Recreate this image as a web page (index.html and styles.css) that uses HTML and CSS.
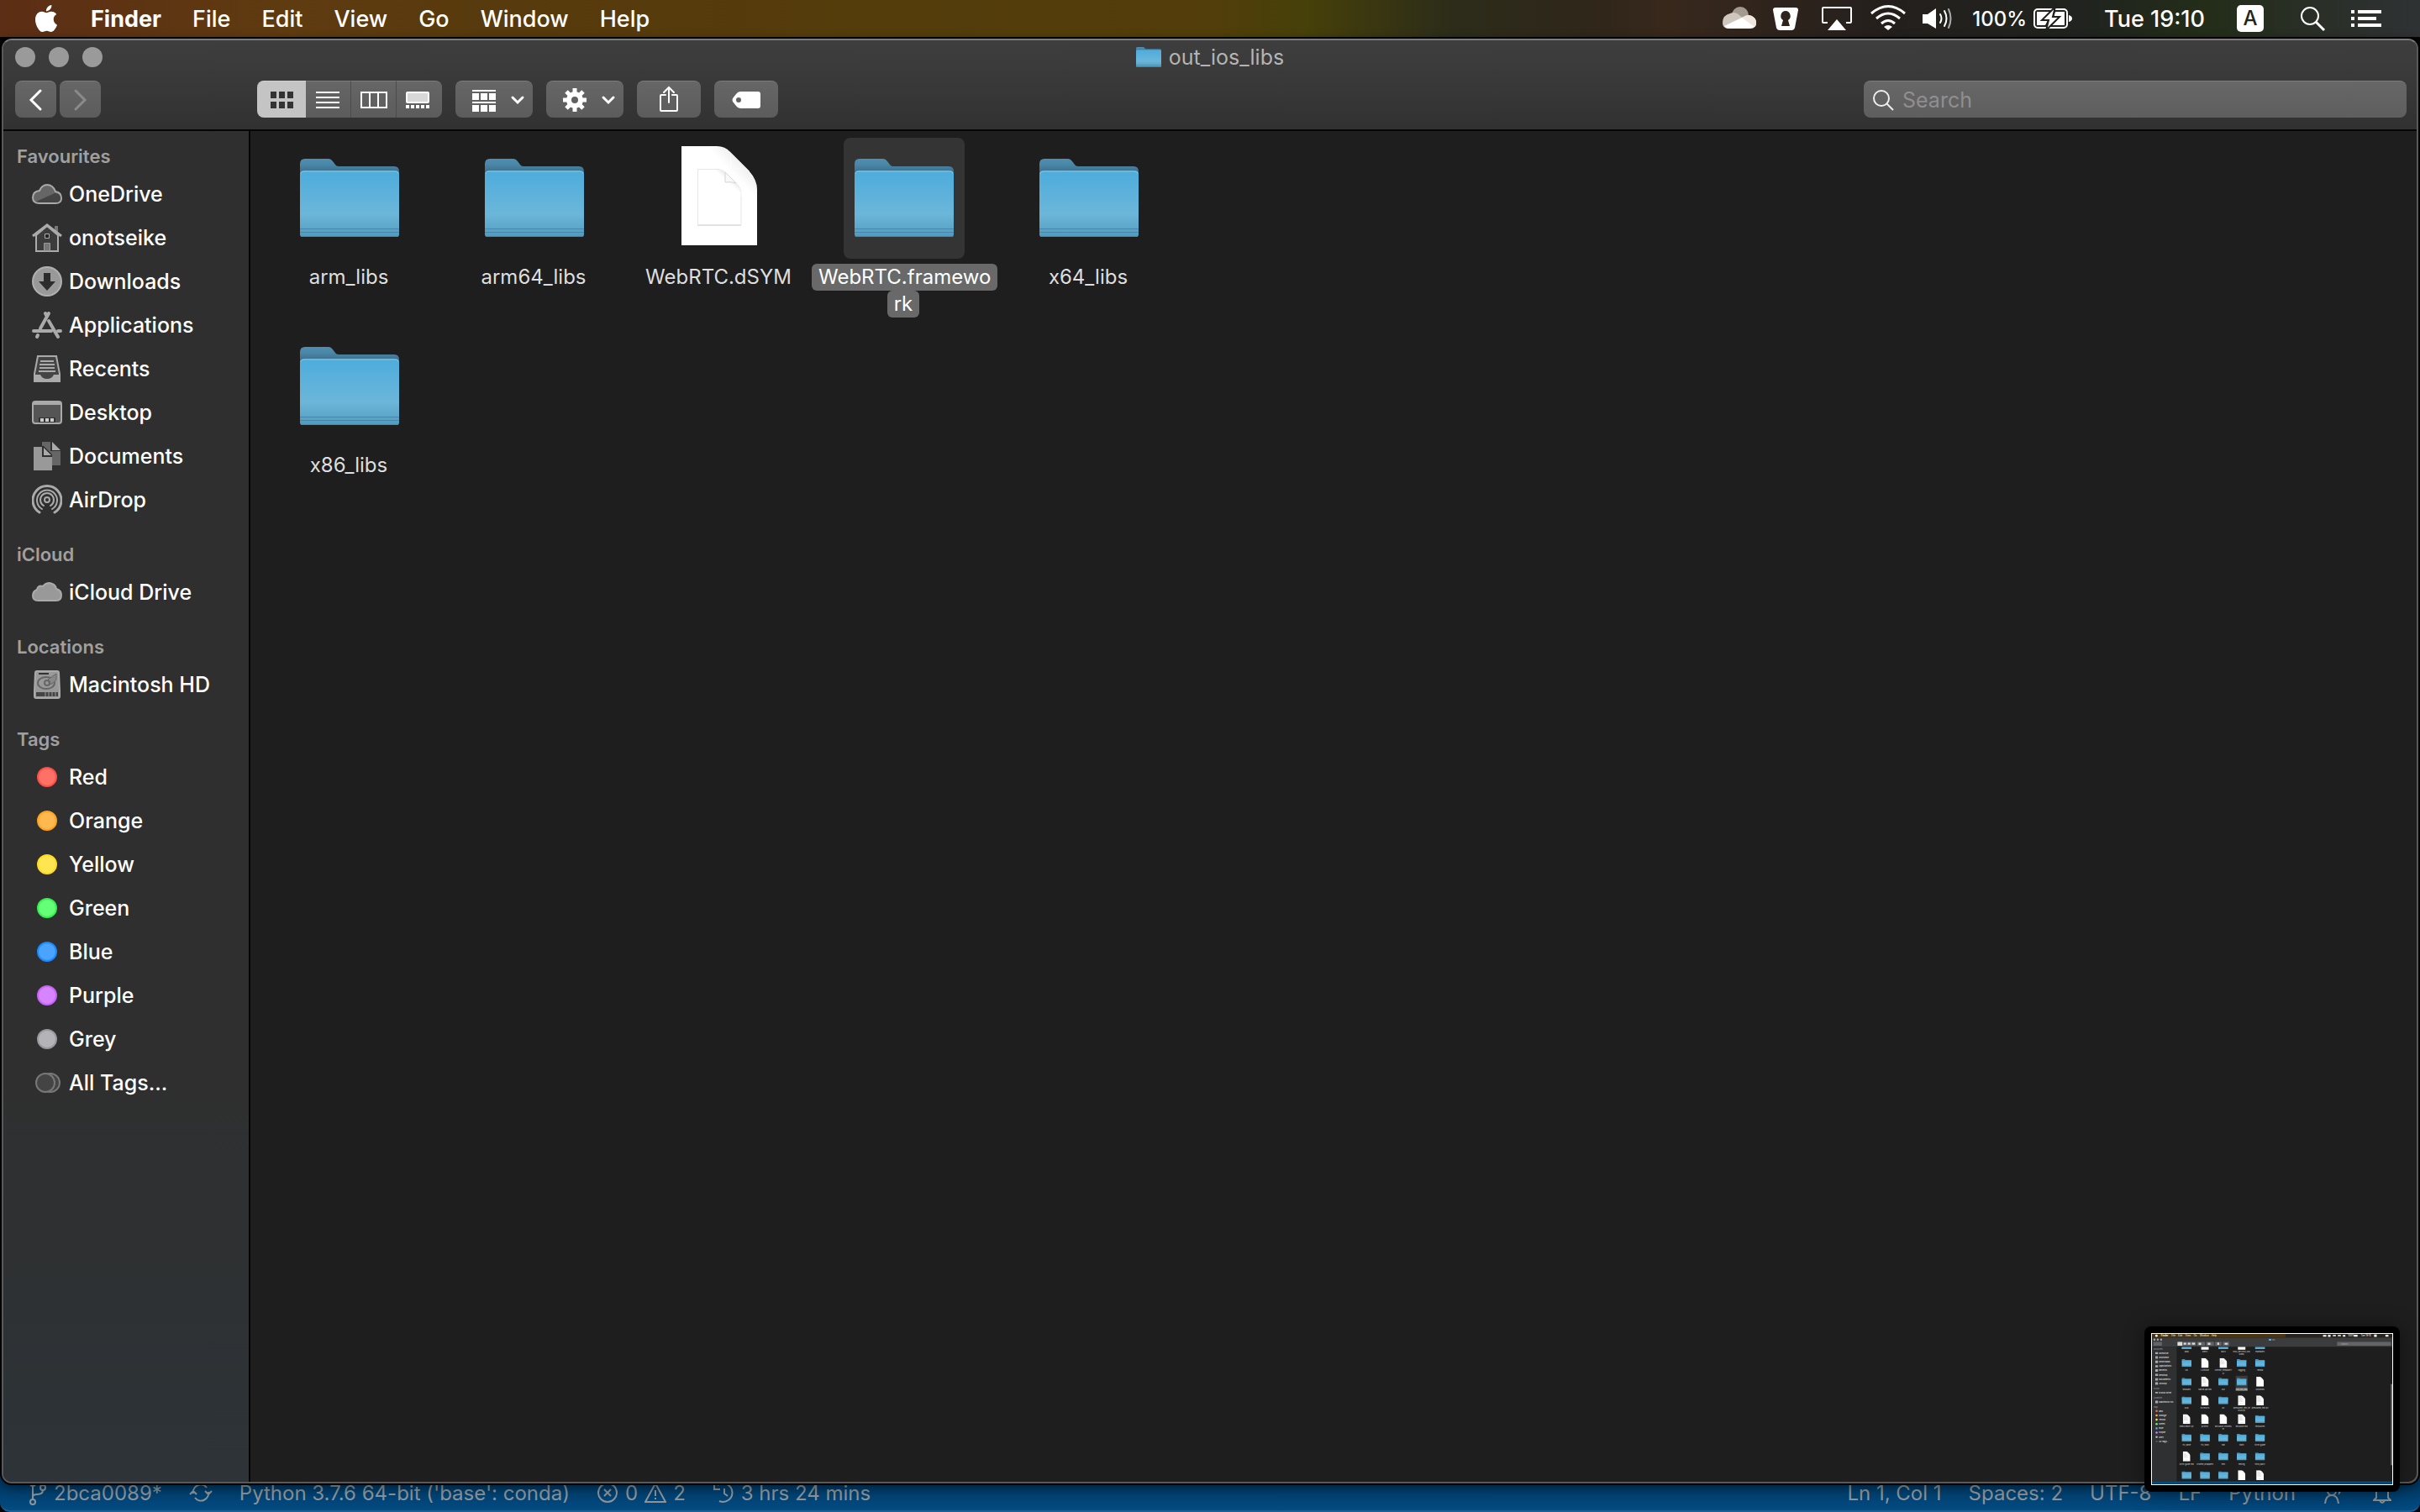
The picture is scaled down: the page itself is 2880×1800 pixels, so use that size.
FILE: index.html
```html
<!DOCTYPE html>
<html lang="en">
<head>
    <meta charset="UTF-8">
    <meta name="viewport" content="width=device-width, initial-scale=1.0">
    <title>out_ios_libs</title>
    <link rel="stylesheet" href="styles.css">
</head>
<body>

    <!-- shared shapes -->
    <svg class="defs" width="0" height="0" aria-hidden="true">
        <defs>
            <linearGradient id="front" x1="0" y1="0" x2="0" y2="1">
                <stop offset="0" stop-color="#4dacdc"/>
                <stop offset="0.65" stop-color="#6bb6d9"/>
                <stop offset="0.85" stop-color="#5ea8cb"/>
                <stop offset="1" stop-color="#4f9abf"/>
            </linearGradient>
            <linearGradient id="back" x1="0" y1="0" x2="0" y2="1">
                <stop offset="0" stop-color="#4f8fb3"/>
                <stop offset="0.18" stop-color="#4a86a8"/>
                <stop offset="0.36" stop-color="#3f738f"/>
            </linearGradient>
            <linearGradient id="fold" x1="0" y1="1" x2="1" y2="0">
                <stop offset="0" stop-color="#ffffff"/>
                <stop offset="1" stop-color="#e4e4e4"/>
            </linearGradient>
            <linearGradient id="shade" x1="0" y1="1" x2="1" y2="0">
                <stop offset="0.55" stop-color="#ffffff"/>
                <stop offset="0.8" stop-color="#d8d8d8"/>
            </linearGradient>
            <symbol id="folder" viewBox="0 0 118 94">
                <path fill="url(#back)" d="M0 6Q0 0 6 0H34Q37 0 39 3L42 7Q43 9 46 9H112Q118 9 118 15V40H0Z"/>
                <path fill="url(#front)" d="M0 19Q0 14 5 14H113Q118 14 118 19V90Q118 93 115 93H3Q0 93 0 90Z"/>
                <path fill="none" stroke="#7cc6e8" d="M1 18Q1 15 5 15H113Q117 15 117 18"/>
                <path stroke="#4588ab" d="M0 83.500H118M0 87.500H118M1 92.500H117"/>
            </symbol>
            <symbol id="doc" viewBox="0 0 90 118">
                <path fill="#fff" d="M0 0H42Q52 0 58 7L80 29Q90 40 90 52V118H0Z"/>
                <path fill="url(#shade)" opacity="0.6" d="M24 1H42Q52 0 58 8V27Q72 26 80 30Q90 40 90 52V70L58 50Z"/>
                <path fill="url(#fold)" d="M57 6L81 30Q72 25 58 27Q60 14 57 6Z"/>
                <path fill="#fff" stroke="#e6e6e6" d="M19.500 27.500H44Q50 28 54 33L66 45Q71 50 71 58V93.500H19.500Z"/>
                <path fill="url(#shade)" d="M35 28H44Q50 28 54 33L66 45Q71 50 71 60L52 48Z"/>
                <path fill="#fafafa" stroke="#d4d4d4" d="M52 31L65 44Q60 42 52 43Z"/>
                <path stroke="#dedede" d="M19 94.500H71"/>
            </symbol>
            <symbol id="page" viewBox="0 0 90 118">
                <path fill="#fff" d="M0 0H42Q52 0 58 7L80 29Q90 40 90 52V118H0Z"/>
                <path fill="#ddd" d="M57 6L81 30Q72 25 58 27Z"/>
            </symbol>
            <symbol id="textpage" viewBox="0 0 90 118">
                <use href="#page"/>
                <path stroke="#bbb" stroke-width="4" d="M12 22H42M12 34H48M12 46H60M12 58H54M12 70H64M30 100H62"/>
            </symbol>
        </defs>
    </svg>

    <header class="menubar">
        <nav class="menus">
            <svg class="apple" viewBox="0 0 24 24" width="32" height="32"><path fill="#fff" d="M12.152 6.896c-.948 0-2.415-1.078-3.960-1.040-2.040.027-3.910 1.183-4.961 3.014-2.117 3.675-.546 9.103 1.519 12.090 1.013 1.454 2.208 3.090 3.792 3.039 1.520-.065 2.090-.987 3.935-.987 1.831 0 2.350.987 3.960.948 1.637-.026 2.676-1.480 3.676-2.948 1.156-1.688 1.636-3.325 1.662-3.415-.039-.013-3.182-1.221-3.220-4.857-.026-3.040 2.480-4.494 2.597-4.559-1.429-2.090-3.623-2.324-4.390-2.376-2-.156-3.675 1.090-4.610 1.090zM15.530 3.830c.843-1.012 1.400-2.427 1.245-3.830-1.207.052-2.662.805-3.532 1.818-.780.896-1.454 2.338-1.273 3.714 1.338.104 2.715-.688 3.559-1.701"/></svg>
            <a href="#" class="app">Finder</a>
            <a href="#">File</a>
            <a href="#">Edit</a>
            <a href="#">View</a>
            <a href="#">Go</a>
            <a href="#">Window</a>
            <a href="#">Help</a>
        </nav>
        <div class="extras">
            <svg width="48" height="44" viewBox="0 0 48 44">
                <circle cx="25" cy="18" r="10" fill="#a49a90"/>
                <path fill="#cfc7be" d="M4 27Q4 18 13 16Q19 13 25 19L31 24L10 34Q4 33 4 27Z"/>
                <path fill="#fff" d="M6 31L29 20Q34 17 38 19Q44 21 44 27Q44 34 37 34H12Q8 34 6 31Z"/>
                <path fill="#efe7de" d="M27 21Q34 16 39 19Q44 22 44 27Q44 31 42 32Z"/>
            </svg>
            <svg width="46" height="44" viewBox="0 0 46 44">
                <path fill="#fff" fill-rule="evenodd" d="M11 9H35Q38 9 38 12L34 33Q33 36 30 36H16Q13 36 12 33L8 12Q8 9 11 9ZM23 13a6 6 0 0 0-3 11l-2 7h10l-2-7a6 6 0 0 0-3-11Z"/>
            </svg>
            <svg width="60" height="44" viewBox="0 0 60 44">
                <path fill="none" stroke="#fff" stroke-width="2" d="M19 27H14Q13 27 13 26V10Q13 9 14 9H46Q47 9 47 10V26Q47 27 46 27H41"/>
                <path fill="#fff" d="M30 23L41 36H19Z"/>
            </svg>
            <svg width="46" height="44" viewBox="0 0 46 44">
                <g fill="none" stroke="#fff" stroke-width="3"><path d="M3 16Q23 -1 43 16M9 22Q23 10 37 22M15 28Q23 21 31 28"/></g>
                <path fill="#fff" d="M23 36L18 32Q23 28 28 32Z"/>
            </svg>
            <svg width="54" height="44" viewBox="0 0 54 44">
                <path fill="#fff" d="M10 17H16L26 10V34L16 28H10Z"/>
                <path fill="none" stroke="#fff" stroke-width="2" stroke-linecap="round" d="M31 17Q34 22 31 27M36 13Q41 22 36 31"/>
                <path fill="none" stroke="#aaa" stroke-width="2" stroke-linecap="round" d="M41 11Q46 22 41 33"/>
            </svg>
            <span class="charge">100%</span>
            <svg width="46" height="44" viewBox="0 0 46 44">
                <rect x="1" y="11" width="39" height="22" rx="4" fill="none" stroke="#fff" stroke-width="2"/>
                <path fill="#fff" d="M4 14H20L10 24H17L14 30H4ZM26 14H37V30H22L31 21H24ZM42 18Q46 19 46 22T42 26Z"/>
                <path fill="#fff" stroke="#20221f" stroke-width="2" d="M26 8L10 24H18L15 36L31 20H23Z"/>
            </svg>
            <span class="clock">Tue 19:10</span>
            <span class="input-source">A</span>
            <svg width="88" height="44" viewBox="0 0 88 44">
                <circle cx="47" cy="19" r="10" fill="none" stroke="#fff" stroke-width="2"/>
                <path stroke="#fff" stroke-width="3" d="M54 26L64 36"/>
            </svg>
            <svg width="36" height="44" viewBox="0 0 36 44">
                <path fill="#fff" d="M0 12h4v4h-4zM0 20h4v4h-4zM0 28h4v4h-4zM8 12h28v4h-28zM8 20h22v4h-22zM8 28h28v4h-28z"/>
            </svg>
        </div>
    </header>

    <main class="window">
        <div class="titlebar">
            <div class="lights"><i></i><i></i><i></i></div>
            <div class="title"><svg width="30" height="24"><use href="#folder"/></svg>out_ios_libs</div>
        </div>

        <div class="toolbar">
            <div class="nav-buttons">
                <button aria-label="Back"><svg width="49" height="44" viewBox="0 0 49 44"><path fill="none" stroke="#fff" stroke-width="3" stroke-linecap="round" d="M30 11L19 22L30 33"/></svg></button>
                <button aria-label="Forward"><svg width="49" height="44" viewBox="0 0 49 44"><path fill="none" stroke="#8a8a8a" stroke-width="3" stroke-linecap="round" d="M19 11L30 22L19 33"/></svg></button>
            </div>

            <div class="views">
                <button class="active" aria-label="Icons"><svg width="54" height="44" viewBox="0 0 54 44"><path fill="#333" d="M14 12h7v8h-7zM24 12h7v8h-7zM34 12h7v8h-7zM14 24h7v8h-7zM24 24h7v8h-7zM34 24h7v8h-7z"/></svg></button>
                <button aria-label="List"><svg width="53" height="44" viewBox="0 0 53 44"><path stroke="#fff" stroke-width="2" d="M12 13H40M12 19H40M12 25H40M12 31H40"/></svg></button>
                <button aria-label="Columns"><svg width="53" height="44" viewBox="0 0 53 44"><path fill="none" stroke="#fff" stroke-width="2" d="M12 13H42V31H12ZM22 13V31M32 13V31"/></svg></button>
                <button aria-label="Gallery"><svg width="54" height="44" viewBox="0 0 54 44"><rect x="12" y="13" width="26" height="12" rx="1" fill="#d8d8d8" stroke="#fff" stroke-width="2"/><path fill="#fff" d="M11 28h4v4h-4zM17 28h4v4h-4zM23 28h4v4h-4zM29 28h4v4h-4zM35 28h4v4h-4z"/></svg></button>
            </div>

            <button aria-label="Group by"><svg width="92" height="44" viewBox="0 0 92 44"><path fill="#fff" d="M20 10h28v2h-28zM20 24h28v2h-28zM20 14h8v8h-8zM30 14h8v8h-8zM40 14h8v8h-8zM20 28h8v8h-8zM30 28h8v8h-8zM40 28h8v8h-8z"/><path fill="none" stroke="#fff" stroke-width="3" stroke-linecap="round" d="M68 19L74 25L80 19"/></svg></button>
            <button aria-label="Actions"><svg width="92" height="44" viewBox="0 0 92 44"><circle cx="34" cy="22" r="7" fill="none" stroke="#fff" stroke-width="6"/><path stroke="#fff" stroke-width="5" d="M34 8V14M34 30V36M20 22H26M42 22H48M24 12L28 16M40 28L44 32M44 12L40 16M28 28L24 32"/><path fill="none" stroke="#fff" stroke-width="3" stroke-linecap="round" d="M68 19L74 25L80 19"/></svg></button>
            <button aria-label="Share"><svg width="76" height="44" viewBox="0 0 76 44"><path fill="none" stroke="#fff" stroke-width="2" stroke-linecap="round" d="M34 16H29Q28 16 28 17V34Q28 35 29 35H47Q48 35 48 34V17Q48 16 47 16H42M38 25V7M32 13L38 7L44 13"/></svg></button>
            <button aria-label="Tags"><svg width="76" height="44" viewBox="0 0 76 44"><path fill="#fff" fill-rule="evenodd" d="M31 12H52Q55 12 55 15V29Q55 32 52 32H31Q28 32 26 29L22 24Q21 22 22 20L26 15Q28 12 31 12ZM29 19a3 3 0 1 0 0 6a3 3 0 0 0 0-6Z"/></svg></button>

            <label class="search">
                <svg width="26" height="26" viewBox="0 0 26 26"><circle cx="11" cy="11" r="9" fill="none" stroke="#eee" stroke-width="2"/><path stroke="#eee" stroke-width="2" d="M17 17L25 25"/></svg>
                <input type="text" placeholder="Search" aria-label="Search">
            </label>
        </div>

        <div class="content">
            <aside class="sidebar">
                <h2>Favourites</h2>
                <a href="#"><svg viewBox="0 0 36 36"><path fill="#666" stroke="#aaa" stroke-width="2" d="M9 29Q1 29 1 22Q1 15 9 14Q12 7 18 7Q25 7 28 15Q35 16 35 23Q35 29 28 29Z"/><path fill="#444" d="M5 27L27 17Q34 17 34 23Q34 28 28 28H9Z"/></svg>OneDrive</a>
                <a href="#"><svg viewBox="0 0 36 36"><path fill="#777" d="M27 4h4v9l-4-4z"/><path fill="#3c3c3c" stroke="#aaa" stroke-width="2" d="M5 15V34H31V15L18 4Z"/><path fill="none" stroke="#aaa" stroke-width="3" d="M1 16L18 3L35 16"/><path fill="#222" stroke="#aaa" d="M15.500 13.500h5v5h-5z"/><path fill="#777" stroke="#999" d="M14.500 24.500h7v9h-7z"/></svg>onotseike</a>
                <a href="#"><svg viewBox="0 0 36 36"><circle cx="18" cy="18" r="17" fill="#999" stroke="#b0b0b0" stroke-width="2"/><path fill="#2c2c2c" d="M14 8H22V18H28L18 29L8 18H14Z"/></svg>Downloads</a>
                <a href="#"><svg viewBox="0 0 36 36"><g fill="none" stroke="#aaa" stroke-width="4" stroke-linecap="round"><path d="M2 25H23M31 25H34M20 4L10 22M16 4L18 8M20 13L31 32M7 30L6 32"/></g></svg>Applications</a>
                <a href="#"><svg viewBox="0 0 36 36"><path fill="#444" stroke="#aaa" stroke-width="2" d="M7 3H29L33 24V33H3V24Z"/><path fill="#aaa" d="M3 25H10Q12 30 18 30T26 25H33V34H3Z"/><path stroke="#aaa" stroke-width="2" d="M10 9H26M9 13H27M9 17H27M8 21H28"/></svg>Recents</a>
                <a href="#"><svg viewBox="0 0 36 36"><rect x="1" y="5" width="34" height="26" rx="3" fill="#555" stroke="#aaa" stroke-width="2"/><path fill="#aaa" d="M2 5H34V9H2Z"/><path fill="#333" d="M8 24h20v6h-20z"/><path fill="#ccc" d="M10 25h4v4h-4zM16 25h4v4h-4zM22 25h4v4h-4z"/></svg>Desktop</a>
                <a href="#"><svg viewBox="0 0 36 36"><path fill="#666" d="M12 1H22V12H34V29H24V16L14 6H12Z"/><path fill="#aaa" d="M24 1L34 11H24Z"/><path fill="#999" d="M2 7H12V19H24V35H2Z"/><path fill="#aaa" d="M14 8L23 17H14Z"/></svg>Documents</a>
                <a href="#"><svg viewBox="0 0 36 36"><g fill="none" stroke="#aaa" stroke-width="2" stroke-linecap="round"><path stroke-width="3" d="M9 33A17 17 0 1 1 27 33"/><path d="M12 29A12 12 0 1 1 24 29M14 25A8 8 0 1 1 22 25"/></g><circle cx="18" cy="18" r="3" fill="none" stroke="#aaa" stroke-width="2"/></svg>AirDrop</a>

                <h2>iCloud</h2>
                <a href="#"><svg viewBox="0 0 36 36"><path fill="#999" stroke="#aaa" stroke-width="2" d="M7 28Q1 28 1 22Q1 17 6 15Q7 9 13 11Q16 7 21 7Q28 8 29 14Q35 16 35 21Q35 28 29 28Z"/></svg>iCloud Drive</a>

                <h2>Locations</h2>
                <a href="#"><svg viewBox="0 0 36 36"><path fill="#999" stroke="#aaa" stroke-width="2" d="M6 2H30Q32 2 32 4L33 26V32Q33 34 31 34H5Q3 34 3 32V26L4 4Q4 2 6 2Z"/><path stroke="#333" stroke-width="2" d="M8 5H20"/><ellipse cx="17" cy="16" rx="10" ry="7" fill="none" stroke="#666" stroke-width="2"/><path fill="#888" stroke="#666" d="M19 12L29 5V12Q26 17 21 18Z"/><circle cx="18" cy="16" r="3" fill="none" stroke="#666" stroke-width="2"/><path fill="#444" d="M5 27h26v5h-26z"/><path stroke="#999" d="M16 27v5M20 27v5M24 27v5M28 27v5"/></svg>Macintosh HD</a>

                <h2>Tags</h2>
                <a href="#"><i class="dot red"></i>Red</a>
                <a href="#"><i class="dot orange"></i>Orange</a>
                <a href="#"><i class="dot yellow"></i>Yellow</a>
                <a href="#"><i class="dot green"></i>Green</a>
                <a href="#"><i class="dot blue"></i>Blue</a>
                <a href="#"><i class="dot purple"></i>Purple</a>
                <a href="#"><i class="dot grey"></i>Grey</a>
                <a href="#"><svg viewBox="0 0 36 36"><g fill="#444" stroke="#777" stroke-width="2"><circle cx="22" cy="18" r="11"/><circle cx="16" cy="18" r="11"/></g></svg>All Tags...</a>
            </aside>

            <section class="files">
                <figure><div class="thumb"><svg width="118" height="94"><use href="#folder"/></svg></div><figcaption><span>arm_libs</span></figcaption></figure>
                <figure><div class="thumb"><svg width="118" height="94"><use href="#folder"/></svg></div><figcaption><span>arm64_libs</span></figcaption></figure>
                <figure><div class="thumb file"><svg width="90" height="118"><use href="#doc"/></svg></div><figcaption><span>WebRTC.dSYM</span></figcaption></figure>
                <figure class="selected"><div class="thumb"><svg width="118" height="94"><use href="#folder"/></svg></div><figcaption><span>WebRTC.framewo<wbr>rk</span></figcaption></figure>
                <figure><div class="thumb"><svg width="118" height="94"><use href="#folder"/></svg></div><figcaption><span>x64_libs</span></figcaption></figure>
                <figure><div class="thumb"><svg width="118" height="94"><use href="#folder"/></svg></div><figcaption><span>x86_libs</span></figcaption></figure>
            </section>
        </div>
    </main>

    <footer class="statusbar">
        <span><svg width="22" height="30" viewBox="0 0 22 30"><g fill="none" stroke="#8c9499" stroke-width="2"><circle cx="5" cy="4" r="3"/><circle cx="5" cy="26" r="3"/><circle cx="17" cy="9" r="3"/><path d="M5 7V23M17 12Q17 17 10 17Q5 17 5 20"/></g></svg>2bca0089*</span>
        <span><svg width="28" height="28" viewBox="0 0 28 28"><path fill="none" stroke="#8c9499" stroke-width="2" d="M5 15A9 9 0 0 1 21 8M23 13A9 9 0 0 1 7 20M1 16L5 12L9 16M19 12L23 16L27 12"/></svg></span>
        <span>Python 3.7.6 64-bit ('base': conda)</span>
        <span><svg width="26" height="26" viewBox="0 0 26 26"><g fill="none" stroke="#8c9499" stroke-width="2"><circle cx="13" cy="13" r="11"/><path d="M9 9L17 17M17 9L9 17"/></g></svg>0 <svg width="26" height="26" viewBox="0 0 26 26"><path fill="none" stroke="#8c9499" stroke-width="2" d="M13 2L25 24H1ZM13 10V17M13 19V21"/></svg>2</span>
        <span><svg width="26" height="26" viewBox="0 0 26 26"><path fill="none" stroke="#8c9499" stroke-width="2" d="M6 4A11 11 0 1 1 8 23M2 2V9H9M14 8V14L18 17"/></svg>3 hrs 24 mins</span>
        <span class="right">Ln 1, Col 1</span>
        <span>Spaces: 2</span>
        <span>UTF-8</span>
        <span>LF</span>
        <span>Python</span>
        <span><svg width="28" height="28" viewBox="0 0 28 28"><path fill="none" stroke="#8c9499" stroke-width="2" d="M3 27Q4 17 11 17T19 27M14 2H27V10H23L20 14V10"/><circle cx="11" cy="12" r="5" fill="none" stroke="#8c9499" stroke-width="2"/></svg></span>
        <span><svg width="22" height="28" viewBox="0 0 22 28"><path fill="none" stroke="#8c9499" stroke-width="2" d="M4 20V11Q4 3 11 3T18 11V20L21 23H1ZM8 23Q11 29 14 23"/></svg></span>
    </footer>

    <!-- floating preview of the previous capture -->
    <div class="preview">
        <svg viewBox="0 0 2880 1800" aria-label="Preview">
            <rect width="2880" height="1800" fill="#1e1e1e"/>
            <rect width="2880" height="46" fill="#4a330f"/>
            <rect x="1600" width="1280" height="46" fill="#262420"/>
            <rect y="46" width="2880" height="108" fill="#3a3c3e"/>
            <rect y="154" width="296" height="1610" fill="#2f3032"/>
            <rect y="1766" width="2880" height="34" fill="#034a80"/>
            <g fill="#fff" font-size="28">
                <circle cx="54" cy="22" r="14"/>
                <text x="109" y="32" font-weight="700">Finder</text><text x="234" y="32">File</text><text x="315" y="32">Edit</text><text x="401" y="32">View</text><text x="501" y="32">Go</text><text x="575" y="32">Window</text><text x="715" y="32">Help</text>
                <path d="M2050 12h40v20h-40zM2110 10h30v24h-30zM2168 12h36v16h-36zM2228 12h36v16h-36zM2288 12h30v20h-30zM2420 10h44v22h-44zM2662 8h32v28h-32zM2798 10h36v22h-36z"/>
                <text x="2350" y="32">100%</text><text x="2504" y="32">Tue 19:10</text>
            </g>
            <g fill="#aaa"><circle cx="30" cy="68" r="12"/><circle cx="70" cy="68" r="12"/><circle cx="110" cy="68" r="12"/></g>
            <path fill="#626466" d="M18 96h102v44h-102zM364 96h162v44h-162zM542 96h92v44h-92zM650 96h92v44h-92zM758 96h76v44h-76zM850 96h76v44h-76zM2218 96h646v44h-646z"/>
            <path fill="#ddd" d="M306 96h58v44h-58zM380 106h30v22h-30zM430 106h30v22h-30zM480 106h36v22h-36zM560 106h30v24h-30zM670 106h30v24h-30zM784 104h20v28h-20zM872 108h36v20h-36z"/>
            <use href="#folder" x="1400" y="56" width="30" height="24"/>
            <text x="1438" y="77" fill="#bbb" font-size="26">src</text>
            <text x="2264" y="128" fill="#aaa" font-size="26">Search</text>

            <g fill="#aaa" font-size="22"><text x="21" y="194">Favourites</text><text x="21" y="668">iCloud</text><text x="21" y="778">Locations</text><text x="21" y="888">Tags</text></g>
            <path fill="#aaa" d="M40 220h32v22h-32zM42 268h28v28h-28zM40 320h32v30h-32zM40 374h32v26h-32zM40 424h32v28h-32zM40 478h32v26h-32zM40 530h32v28h-32zM40 580h32v30h-32zM40 694h32v18h-32zM40 800h32v30h-32z"/>
            <g fill="#fff" font-size="26">
                <text x="82" y="239">OneDrive</text><text x="82" y="291">onotseike</text><text x="82" y="343">Downloads</text><text x="82" y="395">Applications</text><text x="82" y="447">Recents</text><text x="82" y="499">Desktop</text><text x="82" y="551">Documents</text><text x="82" y="603">AirDrop</text>
                <text x="82" y="713">iCloud Drive</text><text x="82" y="823">Macintosh HD</text>
                <text x="82" y="933">Red</text><text x="82" y="985">Orange</text><text x="82" y="1037">Yellow</text><text x="82" y="1089">Green</text><text x="82" y="1141">Blue</text><text x="82" y="1193">Purple</text><text x="82" y="1245">Grey</text><text x="82" y="1297">All Tags...</text>
            </g>
            <circle cx="56" cy="924" r="13" fill="#ff6961"/><circle cx="56" cy="976" r="13" fill="#ffb347"/><circle cx="56" cy="1028" r="13" fill="#ffe34d"/><circle cx="56" cy="1080" r="13" fill="#5fff74"/><circle cx="56" cy="1132" r="13" fill="#46a0ff"/><circle cx="56" cy="1184" r="13" fill="#d47dff"/><circle cx="56" cy="1236" r="13" fill="#b4b4b8"/><circle cx="56" cy="1288" r="12" fill="#555"/>

            <rect x="1003" y="500" width="144" height="144" rx="8" fill="#3a3a3a"/>
            <rect x="1003" y="648" width="144" height="34" rx="6" fill="#777"/>

            <g fill="#55acd6"><path d="M356 156h118v24h-118zM796 156h118v24h-118zM1236 156h118v24h-118z"/></g>
            <path fill="#fff" d="M590 156h90v32h-90zM1030 156h90v32h-90z"/>

            <use href="#folder" x="356" y="302" width="118" height="94"/><use href="#page" x="590" y="290" width="90" height="118"/><use href="#textpage" x="810" y="290" width="90" height="118"/><use href="#folder" x="1016" y="302" width="118" height="94"/><use href="#folder" x="1236" y="302" width="118" height="94"/>
            <use href="#folder" x="356" y="526" width="118" height="94"/><use href="#textpage" x="590" y="514" width="90" height="118"/><use href="#folder" x="796" y="526" width="118" height="94"/><use href="#folder" x="1016" y="526" width="118" height="94"/><use href="#page" x="1250" y="514" width="90" height="118"/>
            <use href="#folder" x="356" y="750" width="118" height="94"/><use href="#page" x="590" y="738" width="90" height="118"/><use href="#folder" x="796" y="750" width="118" height="94"/><use href="#textpage" x="1030" y="738" width="90" height="118"/><use href="#textpage" x="1250" y="738" width="90" height="118"/>
            <use href="#textpage" x="370" y="962" width="90" height="118"/><use href="#page" x="590" y="962" width="90" height="118"/><use href="#page" x="810" y="962" width="90" height="118"/><use href="#textpage" x="1030" y="962" width="90" height="118"/><use href="#folder" x="1236" y="974" width="118" height="94"/>
            <use href="#folder" x="356" y="1198" width="118" height="94"/><use href="#folder" x="576" y="1198" width="118" height="94"/><use href="#folder" x="796" y="1198" width="118" height="94"/><use href="#folder" x="1016" y="1198" width="118" height="94"/><use href="#folder" x="1236" y="1198" width="118" height="94"/>
            <use href="#textpage" x="370" y="1410" width="90" height="118"/><use href="#folder" x="576" y="1422" width="118" height="94"/><use href="#folder" x="796" y="1422" width="118" height="94"/><use href="#folder" x="1016" y="1422" width="118" height="94"/><use href="#folder" x="1236" y="1422" width="118" height="94"/>
            <use href="#folder" x="356" y="1646" width="118" height="94"/><use href="#folder" x="576" y="1646" width="118" height="94"/><use href="#folder" x="796" y="1646" width="118" height="94"/><use href="#page" x="1030" y="1634" width="90" height="118"/><use href="#textpage" x="1250" y="1634" width="90" height="118"/>

            <g fill="#ddd" font-size="24" text-anchor="middle">
                <text x="415" y="224">data</text><text x="635" y="224">DEPS</text><text x="855" y="224">docs</text><text x="1075" y="224">ENG_REVIEW_OW</text><text x="1075" y="256">NERS</text><text x="1295" y="224">examples</text>
                <text x="415" y="448">ios</text><text x="635" y="448">LICENSE</text><text x="855" y="448">license_template.t</text><text x="855" y="480">xt</text><text x="1075" y="448">logging</text><text x="1295" y="448">media</text>
                <text x="415" y="672">modules</text><text x="635" y="672">native-api.md</text><text x="855" y="672">out</text><text x="1075" y="672">out_ios_libs</text><text x="1295" y="672">OWNERS</text>
                <text x="415" y="896">p2p</text><text x="635" y="896">PATENTS</text><text x="855" y="896">pc</text><text x="1075" y="896">presubmit_test_m</text><text x="1075" y="928">ocks.py</text><text x="1295" y="896">presubmit_test.py</text>
                <text x="415" y="1120">PRESUBMIT.py</text><text x="635" y="1120">pylintrc</text><text x="855" y="1120">README.chromiu</text><text x="855" y="1152">m</text><text x="1075" y="1120">README.md</text><text x="1295" y="1120">resources</text>
                <text x="415" y="1344">rtc_base</text><text x="635" y="1344">rtc_tools</text><text x="855" y="1344">sdk</text><text x="1075" y="1344">stats</text><text x="1295" y="1344">style-guide</text>
                <text x="415" y="1568">style-guide.md</text><text x="635" y="1568">system_wrappers</text><text x="855" y="1568">test</text><text x="1075" y="1568">testing</text><text x="1295" y="1568">third_party</text>
            </g>
            <rect x="2864" y="600" width="14" height="976" rx="7" fill="#888"/>
        </svg>
    </div>

</body>
</html>
```
FILE: styles.css
```css
* {
    box-sizing: border-box;
}

body {
    margin: 0;
    height: 100vh;
    display: flex;
    flex-direction: column;
    overflow: hidden;
    position: relative;
    background: #050505;
    color: #fff;
    font-family: Inter, "Liberation Sans", sans-serif;
    font-size: 26px;
}

a {
    color: inherit;
    text-decoration: none;
}

svg {
    display: block;
    flex: none;
}

.defs {
    position: absolute;
}

/* Menu bar */
.menubar {
    flex: none;
    height: 44px;
    display: flex;
    justify-content: space-between;
    align-items: center;
    padding: 0 46px 0 39px;
    font-size: 27px;
    font-weight: 500;
    background: linear-gradient(to right, #5c2e15 0%, #5f3b10 12%, #573a0d 20%, #523e0a 50%, #464009 54%, #2c2c1a 60%, #30261a 66%, #38281c 69%, #241f1c 78%, #20231f 86%, #232d18 91%, #2a2f28 96%, #2e3234 100%);
}

.menus {
    display: flex;
    align-items: center;
    gap: 37px;
}

.app {
    font-weight: 700;
}

.extras {
    display: flex;
    align-items: center;
    gap: 8px;
}

.charge {
    width: 72px;
    font-size: 24px;
    text-align: right;
}

.clock {
    width: 180px;
    text-align: center;
}

.input-source {
    width: 32px;
    height: 32px;
    border-radius: 5px;
    background: #fff;
    color: #20261c;
    font-size: 24px;
    line-height: 32px;
    text-align: center;
}

/* Finder window */
.window {
    flex: 1;
    min-height: 0;
    display: flex;
    flex-direction: column;
    position: relative;
    z-index: 1;
    margin: 2px 2px 0;
    border: 2px solid #58595a;
    border-top-color: #7b7c7b;
    border-radius: 12px;
    overflow: hidden;
    background: #1e1e1e;
    box-shadow: 0 0 0 2px #000, 0 4px 14px rgba(0, 0, 0, 0.5);
}

.titlebar {
    height: 40px;
    display: grid;
    grid-template-columns: 1fr auto 1fr;
    align-items: center;
    padding: 0 14px;
    background: linear-gradient(#3e3e3e, #3a3a3a);
}

.lights {
    display: flex;
    gap: 16px;
}

.lights i {
    width: 24px;
    height: 24px;
    border-radius: 50%;
    background: #9a9a9a;
}

.title {
    display: flex;
    align-items: center;
    gap: 9px;
    color: #b4b4b4;
    font-size: 25px;
}

.toolbar {
    display: flex;
    gap: 16px;
    padding: 8px 12px 14px 14px;
    border-bottom: 2px solid #050505;
    background: linear-gradient(#3a3a3a, #313131);
}

.toolbar button {
    height: 44px;
    padding: 0;
    border: 0;
    border-top: 1px solid #7c7c7c;
    border-radius: 8px;
    background: linear-gradient(#666, #5c5c5c);
}

.nav-buttons {
    display: flex;
    gap: 4px;
    width: 272px;
}

.views {
    display: flex;
}

.toolbar .views button {
    border-radius: 0;
    border-right: 1px solid #4c4c4c;
}

.toolbar .views button:first-child {
    border-radius: 8px 0 0 8px;
    padding: 0 2px;
    border-right: 0;
}

.toolbar .views button:last-child {
    border-radius: 0 8px 8px 0;
    border-right: 0;
}

.toolbar .views .active {
    background: #c4c4c4;
    border-top-color: #d0d0d0;
}

.search {
    width: 646px;
    height: 44px;
    display: flex;
    align-items: center;
    gap: 10px;
    margin-left: auto;
    padding: 0 10px;
    border-top: 1px solid #7c7c7c;
    border-radius: 8px;
    background: linear-gradient(#676767, #5e5e5e);
}

.search input {
    flex: 1;
    min-width: 0;
    padding: 0;
    border: 0;
    outline: 0;
    background: none;
    color: #fff;
    font: inherit;
    font-size: 25px;
}

.search input::placeholder {
    color: #8f8f8f;
    opacity: 1;
}

.content {
    flex: 1;
    min-height: 0;
    display: flex;
}

/* Sidebar */
.sidebar {
    flex: none;
    width: 294px;
    padding: 12px 0 0 34px;
    border-right: 2px solid #050505;
    background: linear-gradient(#2f2f2f 70%, #2e3133 85%, #2d3338);
}

.sidebar h2 {
    margin: 22px 0 0 -18px;
    color: #a0a0a0;
    font-size: 22px;
    font-weight: 600;
    line-height: 36px;
}

.sidebar h2:first-child {
    margin-top: 0;
}

.sidebar a {
    display: flex;
    align-items: center;
    gap: 8px;
    height: 52px;
    padding-top: 1px;
    font-size: 25px;
    font-weight: 500;
}

.sidebar svg {
    width: 36px;
    height: 36px;
}

.dot {
    width: 24px;
    height: 24px;
    margin: 0 6px;
    border: 2px solid;
    border-radius: 50%;
}

.red { background: #ff7067; border-color: #ff4f46; }
.orange { background: #ffb84f; border-color: #ffa31c; }
.yellow { background: #ffe650; border-color: #ffdb20; }
.green { background: #66ff78; border-color: #35f04f; }
.blue { background: #4aa3ff; border-color: #1a8aff; }
.purple { background: #d784ff; border-color: #c962fb; }
.grey { background: #b4b4b8; border-color: #98989d; }

/* Files */
.files {
    flex: 1;
    display: grid;
    grid-template-columns: repeat(5, 220px);
    grid-auto-rows: 224px;
    padding: 8px;
}

figure {
    margin: 0;
    display: flex;
    flex-direction: column;
    align-items: center;
    gap: 6px;
}

.thumb {
    width: 144px;
    height: 144px;
    display: flex;
    align-items: center;
    justify-content: center;
    border-radius: 8px;
}

.file {
    padding-bottom: 6px;
}

figcaption {
    width: 100%;
    padding-right: 2px;
    color: #dedede;
    font-size: 24px;
    line-height: 32px;
    text-align: center;
}

figcaption span {
    padding: 1px 8px 2px;
    border-radius: 6px;
    box-decoration-break: clone;
    -webkit-box-decoration-break: clone;
}

.selected .thumb {
    background: #343434;
}

.selected span {
    background: #696969;
    color: #fff;
}

/* Editor status bar peeking out under the window */
.statusbar {
    flex: none;
    height: 46px;
    margin-top: -12px;
    display: flex;
    align-items: center;
    gap: 32px;
    padding: 2px 34px 0;
    border-bottom: 2px solid #1d5f94;
    border-radius: 0 0 12px 12px;
    background: linear-gradient(#003a66 30%, #034b82);
    color: #8c9499;
    font-size: 24px;
    white-space: nowrap;
}

.statusbar span {
    display: flex;
    align-items: center;
    gap: 8px;
}

.statusbar .right {
    margin-left: auto;
}

/* Screenshot preview */
.preview {
    position: absolute;
    right: 24px;
    bottom: 24px;
    z-index: 2;
    width: 304px;
    padding: 8px;
    border-radius: 8px;
    background: #000;
    box-shadow: 0 0 24px rgba(0, 0, 0, 0.4);
}

.preview svg {
    width: 100%;
    border: 1px solid #fff;
}
```
